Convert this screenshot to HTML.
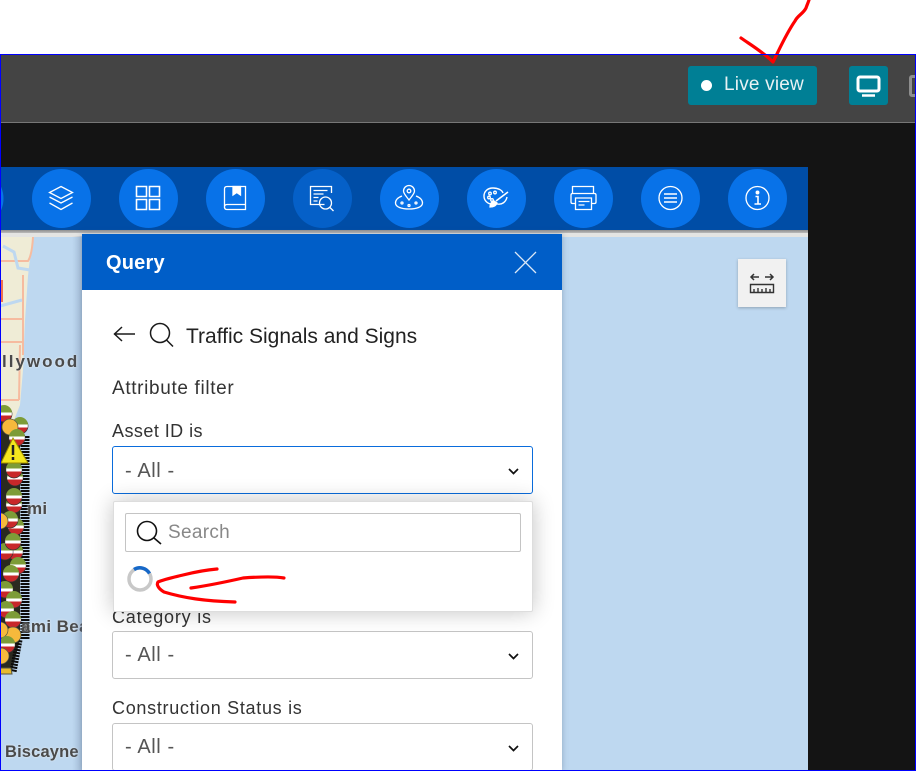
<!DOCTYPE html>
<html><head><meta charset="utf-8">
<style>
html,body{margin:0;padding:0;background:#fff}
#r{position:relative;width:916px;height:771px;overflow:hidden;background:#fff;font-family:"Liberation Sans",sans-serif;color:#222}
#r div{position:absolute;box-sizing:border-box}
.t{white-space:nowrap;font-size:18px;line-height:22px;color:#333;letter-spacing:.55px}
.sel{left:112px;width:421px;height:48px;background:#fff;border:1px solid #c4c4c4;border-radius:3px}
.all{left:125px;font-size:20px;line-height:24px;color:#555;white-space:nowrap;letter-spacing:.6px}
.mapt{font-weight:bold;font-size:17px;color:#4a4a4a;white-space:nowrap;letter-spacing:1.2px;line-height:20px;text-shadow:0 0 2px #eee}
</style></head><body>
<div id="r">
<div style="left:0;top:54px;width:916px;height:717px;background:#141414"></div>
<div style="left:0;top:55px;width:916px;height:67px;background:#444"></div>
<div style="left:0;top:122px;width:916px;height:1px;background:#777"></div>

<div style="left:688px;top:66px;width:129px;height:39px;background:#007f95;border-radius:3px"></div>
<div style="left:701px;top:80px;width:11px;height:11px;background:#fff;border-radius:50%"></div>
<div class="t" style="left:724px;top:74px;color:#e8f2f4;font-size:19px;letter-spacing:.2px">Live view</div>
<div style="left:849px;top:66px;width:39px;height:39px;background:#007f95;border-radius:3px"></div>
<svg style="position:absolute;left:849px;top:66px" width="39" height="39" fill="none" stroke="#fff"><rect x="9" y="11" width="21" height="14" rx="2" stroke-width="3"/><path d="M13 29.500h13" stroke-width="2.500"/></svg>
<div style="left:909px;top:75px;width:12px;height:22px;border:3px solid #8e8e8e;border-radius:3px"></div>

<!-- toolbar -->
<div style="left:0;top:167px;width:808px;height:63px;background:#004da6"></div>
<div style="left:0;top:230px;width:808px;height:4px;background:linear-gradient(#8f8f8f,#c9c9c9)"></div>
<div style="left:0;top:233px;width:808px;height:538px;background:#bed8f0"></div>
<div style="left:0;top:233px;width:808px;height:4px;background:#e4e4e2"></div>

<svg style="position:absolute;left:0;top:167px" width="808" height="63">
<circle cx="-26" cy="31.500" r="29.500" fill="#0872e8"/>
<circle cx="61.500" cy="31.500" r="29.500" fill="#0872e8"/><circle cx="148.500" cy="31.500" r="29.500" fill="#0872e8"/><circle cx="235.500" cy="31.500" r="29.500" fill="#0872e8"/><circle cx="322.500" cy="31.500" r="29.500" fill="#0560c8"/><circle cx="409.500" cy="31.500" r="29.500" fill="#0872e8"/><circle cx="496.500" cy="31.500" r="29.500" fill="#0872e8"/><circle cx="583.500" cy="31.500" r="29.500" fill="#0872e8"/><circle cx="670.500" cy="31.500" r="29.500" fill="#0872e8"/><circle cx="757.500" cy="31.500" r="29.500" fill="#0872e8"/>
<g fill="none" stroke="#fff" stroke-width="1.300">
<path d="M61 19.500l11.500 6L61 31.500l-11.500-6zM49.500 30L61 36l11.500-6M49.500 36L61 42.500 72.500 36"/>
<path stroke-width="1.600" d="M136.500 19.500h10v10h-10zM149.500 19.500h10v10h-10zM136.500 32.500h10v10h-10zM149.500 32.500h10v10h-10z"/>
<path d="M224.500 41V22q0-2.500 2.500-2.500h18.500V42.500H227q-2.500 0-2.500-2.500t2.500-2.500h18.500"/>
<path d="M233 19.500h7.500v8.500l-3.750-2.500-3.750 2.500z" fill="#fff"/>
<path d="M331.500 26v-6.500h-21v18h14M313.500 23.500h14M313.500 27h10M313.500 30.500h5M313.500 34h4"/>
<circle cx="325.500" cy="36" r="6"/><path d="M330 40.500l3.500 3.500"/>
<path d="M409 33c-3-4-5.500-6.500-5.500-9a5.500 5.500 0 0 1 11 0c0 2.500-2.500 5-5.500 9z"/><circle cx="409" cy="24" r="1.800"/>
<path d="M402 29c-4 1.500-6.500 4-6.500 7 0 4 6 6 13.500 6s13.500-2 13.500-6c0-3-2.500-5.500-6.500-7"/>
<circle cx="402" cy="36" r="1"/><circle cx="409" cy="38.500" r="1"/><circle cx="416" cy="36" r="1"/>
<path stroke-width="1.400" d="M503 26c-1-3-5-5-10-5-6 0-9 4-9 8 0 5 4 8 8 8M497 37c5 1 9-2 10-7"/>
<path stroke-width="1.600" d="M508 25l-12 9"/>
<path d="M490 40c0-3 1-5 4-6l3 2c-1 3-4 4-7 4z" fill="#fff"/>
<circle cx="490" cy="26.500" r="1.300"/><circle cx="495" cy="25.500" r="1.300"/><circle cx="489" cy="30.500" r="1.300"/><circle cx="492" cy="33" r="1.300"/>
<path d="M572.500 26.500v-7h21v7M575.500 36.500h-3q-1.500 0-1.500-1.500V28q0-1.500 1.500-1.500h22q1.500 0 1.500 1.500v7q0 1.500-1.500 1.500h-3"/>
<path d="M575.500 31h16v11.500h-16zM578.500 34.500h11M578.500 38h6"/>
<circle cx="670.500" cy="31" r="11.500"/><path stroke-width="1.500" d="M664 27h13M664 31h13M664 35h13"/>
<circle cx="757.500" cy="31" r="11.500"/><path stroke-width="1.600" d="M755.500 29.500h2.500V37M754.500 37h6.500"/><circle cx="757.500" cy="25.500" r="1.300" fill="#fff"/>
</g></svg>

<!-- map land -->
<svg style="position:absolute;left:0;top:0" width="82" height="771">
<defs>
<g id="m"><circle r="8" fill="#c8282a" stroke="#333" stroke-width=".7"/><path d="M-8-1A8 8 0 0 1 8-1z" fill="#7d9c38"/><path d="M-7.800-1.500h15.600v3h-15.600z" fill="#fff"/></g>
<g id="o"><circle r="8" fill="#f6b93c" stroke="#554" stroke-width=".7"/></g>
</defs>
<path d="M0 237H33L30 258 28 276 25 320 23 370 20 405 14 420H0z" fill="#efecd6"/>
<path d="M0 261H28Q32 255 33 237M23 275V355M0 319H24M0 342H23M20 345L19 400M0 400H19" fill="none" stroke="#f6bb9f" stroke-width="2"/>
<path d="M3 246L14 252 18 268 30 270M0 306L22 300" fill="none" stroke="#bed8f0" stroke-width="3"/>
<path d="M0 280h3v22H0z" fill="#ee7050"/>
<path d="M0 420H20V640L12 670H0z" fill="#2a2a20"/>
<path d="M25 436V640" stroke="#0c0c0c" stroke-width="9" stroke-dasharray="2 1"/>
<path d="M19 640L13 672" stroke="#0c0c0c" stroke-width="7" stroke-dasharray="2 1"/>
<use href="#m" x="4" y="414"/><use href="#m" x="20" y="426"/><use href="#o" x="10" y="427"/><use href="#m" x="17" y="438"/>
<use href="#m" x="15" y="478"/><use href="#m" x="14" y="470"/>
<use href="#m" x="14" y="505"/><use href="#m" x="14" y="497"/>
<use href="#m" x="16" y="527"/><use href="#m" x="10" y="520"/><use href="#o" x="0" y="521"/>
<use href="#m" x="15" y="552"/><use href="#m" x="5" y="552"/><use href="#m" x="13" y="542"/>
<use href="#m" x="18" y="566"/><use href="#m" x="11" y="574"/>
<use href="#m" x="5" y="590"/><use href="#m" x="14" y="600"/><use href="#m" x="6" y="610"/><use href="#m" x="13" y="620"/>
<use href="#o" x="13" y="635"/><use href="#o" x="0" y="630"/><use href="#m" x="7" y="645"/><use href="#o" x="1" y="656"/>
<path d="M0 668h11l1 6H0z" fill="#e8bb30" stroke="#554"/>
<path d="M13 438l15 25H1z" fill="#f4e61e" stroke="#a09000"/>
<path d="M13 445v10M13 457v3" stroke="#222" stroke-width="2.500"/>
</svg>
<div class="mapt" style="left:2px;top:352px;letter-spacing:2px">llywood</div>
<div class="mapt" style="left:27px;top:499px;letter-spacing:.2px">mi</div>
<div class="mapt" style="left:21px;top:617px;width:61px;overflow:hidden;letter-spacing:.4px">ami Bea</div>
<div class="mapt" style="left:5px;top:742px;font-size:16.5px;letter-spacing:.15px">Biscayne</div>
<div style="left:72px;top:236px;width:10px;height:535px;background:linear-gradient(90deg,rgba(100,120,150,0),rgba(100,120,150,.25))"></div>

<!-- measure button -->
<div style="left:738px;top:259px;width:48px;height:48px;background:#f1f1f1;box-shadow:0 1px 3px rgba(0,0,0,.25)"></div>
<svg style="position:absolute;left:738px;top:259px" width="48" height="48" fill="none" stroke="#333" stroke-width="1.500"><path d="M13 18h8M16 15l-3 3 3 3M35 18h-8M32 15l3 3-3 3"/><path d="M12.500 25.500h23v8h-23zM16 33v-3M20 33v-4M24 33v-3M28 33v-4M32 33v-3" stroke-width="1.400"/></svg>

<!-- panel -->
<div style="left:82px;top:234px;width:480px;height:537px;background:#fff;box-shadow:0 0 6px rgba(70,90,120,.4)"></div>
<div style="left:82px;top:234px;width:480px;height:56px;background:#005ec8"></div>
<div style="left:106px;top:250px;color:#fff;font-weight:bold;font-size:20px;line-height:26px;letter-spacing:.2px">Query</div>
<svg style="position:absolute;left:514px;top:251px" width="23" height="23" stroke="#dbe8f7" stroke-width="1.300"><path d="M1 1l21 21M22 1L1 22"/></svg>
<svg style="position:absolute;left:110px;top:320px" width="70" height="30" fill="none" stroke="#1a1a1a" stroke-width="1.500"><path d="M4 14h21M12 7l-7.500 7 7.500 7"/><circle cx="50" cy="13" r="9.500"/><path d="M56.500 20l6.500 6.500"/></svg>
<div class="t" style="left:186px;top:324px;font-size:21px;line-height:26px;color:#222;letter-spacing:0">Traffic Signals and Signs</div>
<div class="t" style="left:112px;top:378px;font-size:19px;letter-spacing:.65px">Attribute filter</div>
<div class="t" style="left:112px;top:420px;letter-spacing:.45px">Asset ID is</div>
<div class="sel" style="top:446px;border-color:#0a6cdc"></div>
<div class="all" style="top:459px">- All -</div>

<div class="t" style="left:112px;top:606px;letter-spacing:.8px">Category is</div>
<div class="sel" style="top:631px"></div>
<div class="all" style="top:643px">- All -</div>
<div class="t" style="left:112px;top:697px;letter-spacing:.7px">Construction Status is</div>
<div class="sel" style="top:723px"></div>
<div class="all" style="top:735px">- All -</div>
<svg style="position:absolute;left:0;top:0;pointer-events:none" width="916" height="771" fill="none" stroke="#111" stroke-width="1.700"><path d="M509 469l4.500 4.500 4.500-4.500M509 654l4.500 4.500 4.500-4.500M509 746l4.500 4.500 4.500-4.500"/></svg>

<!-- dropdown -->
<div style="left:113px;top:501px;width:420px;height:111px;background:#fff;border:1px solid #ddd;border-radius:2px;box-shadow:0 0 22px rgba(0,0,0,.24)"></div>
<div style="left:125px;top:513px;width:396px;height:39px;border:1px solid #c4c4c4;border-radius:2px"></div>
<svg style="position:absolute;left:134px;top:518px" width="30" height="30" fill="none" stroke="#111" stroke-width="1.600"><circle cx="13" cy="13" r="9.500"/><path d="M20 20l7 6"/></svg>
<div class="t" style="left:168px;top:521px;font-size:19px;line-height:24px;color:#888;letter-spacing:.3px">Search</div>
<svg style="position:absolute;left:125px;top:564px" width="30" height="30" fill="none" stroke-width="3.500"><circle cx="15" cy="15" r="11" stroke="#c8c8c8"/><path d="M9 5.500A11 11 0 0 1 24.500 9.500" stroke="#1668c8"/></svg>

<!-- annotations -->
<svg style="position:absolute;left:0;top:0" width="916" height="771" fill="none" stroke="#f00" stroke-width="3.200" stroke-linecap="round" stroke-linejoin="round">
<path d="M741 38c10 7 22 14 32 24 7-14 13-28 22-41 3-6 8-7 11-13 1-3 2-5 3-8"/>
<path d="M217 569c-12 1-22 3-34 6-8 2-18 4-25 7-2 3 1 7 6 10 20 6 40 9 71 10"/>
<path d="M191 588c14-2 30-5 52-10 14-1 30-2 41 0"/>
</svg>

<!-- selection outline -->
<div style="left:0;top:54px;width:916px;height:717px;border:1px solid #0000ff"></div>
</div>
</body></html>
